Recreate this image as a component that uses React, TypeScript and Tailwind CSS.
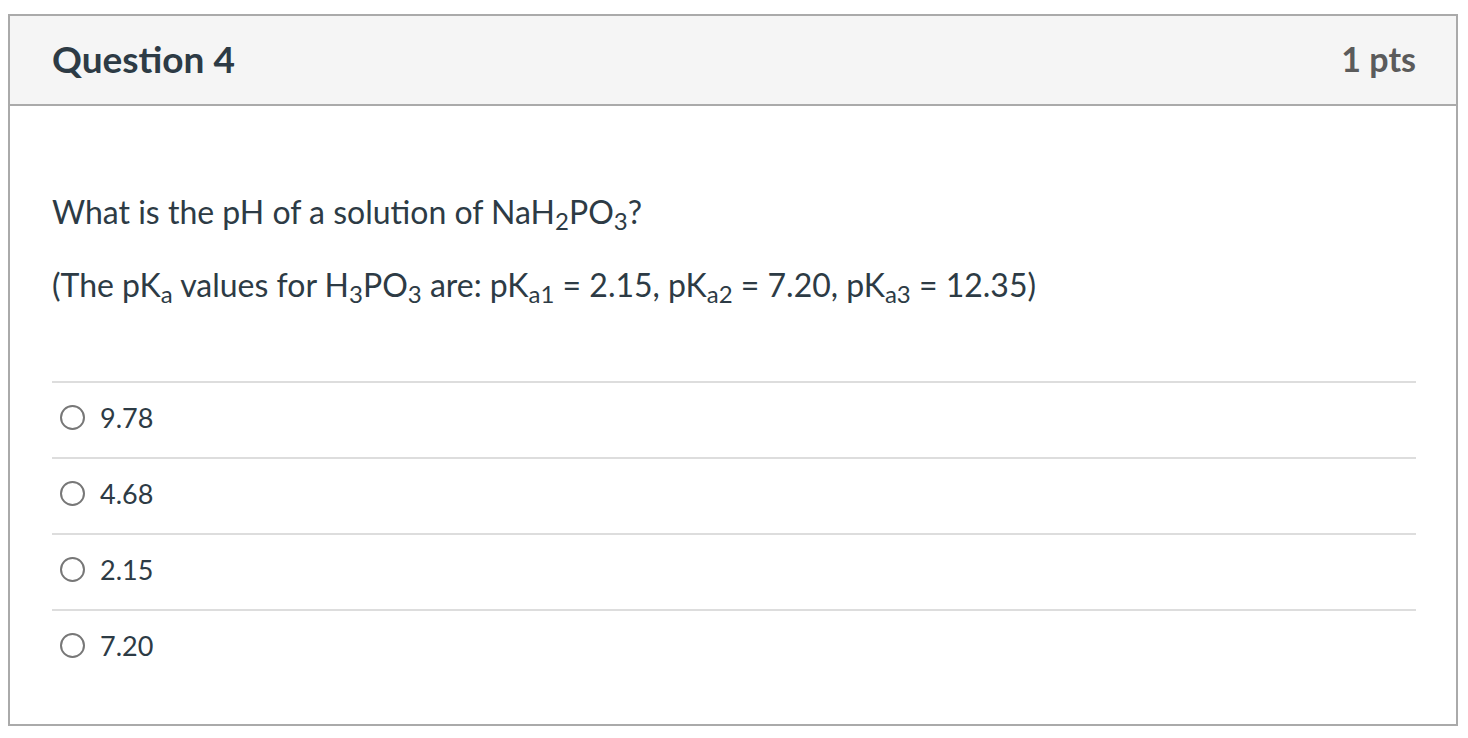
import React from "react";

const answers = ["9.78", "4.68", "2.15", "7.20"];

export default function App() {
  return (
    <div className="min-h-[738px] bg-white pt-[14px] pl-[8px] pr-[10px] font-['Lato','Liberation_Sans',sans-serif] text-[#2d3b45]">
      <div className="border-2 border-[#aaaaaa] bg-white">
        <div className="flex h-[90px] items-center justify-between border-b-2 border-[#aaaaaa] bg-[#f5f5f5] pb-[3px] pl-[42px] pr-[40px]">
          <h2 className="text-[37px] font-bold leading-none text-[#2d3b45]">Question 4</h2>
          <div className="text-[34px] font-bold leading-none text-[#5b5b5b]">1 pts</div>
        </div>
        <div className="pl-[42px] pr-[40px] pt-[82px] pb-[39px]">
          <p className="text-[32px] leading-[48px]">
            What is the pH of a solution of NaH<sub>2</sub>PO<sub>3</sub>?
          </p>
          <p className="mt-[25px] text-[32px] leading-[48px]">
            (The pK<sub>a</sub> values for H<sub>3</sub>PO<sub>3</sub> are: pK<sub>a1</sub> = 2.15, pK
            <sub>a2</sub> = 7.20, pK<sub>a3</sub> = 12.35)
          </p>
          <div className="mt-[72px]">
            {answers.map((a) => (
              <div key={a} className="flex h-[76px] items-center border-t-2 border-[#dddddd] pb-[5px]">
                <span className="ml-[8px] h-[25px] w-[25px] rounded-full border-2 border-[#777777] bg-white" />
                <span className="ml-[15px] text-[27px] leading-none text-[#2d3b45]">{a}</span>
              </div>
            ))}
          </div>
        </div>
      </div>
    </div>
  );
}
